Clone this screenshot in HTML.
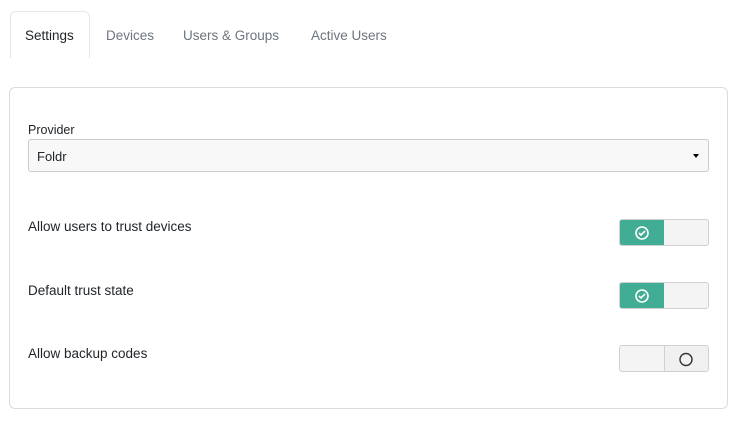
<!DOCTYPE html>
<html><head><meta charset="utf-8"><style>
body{margin:0;width:729px;height:422px;background:#fff;font-family:"Liberation Sans",sans-serif;color:#212529;position:relative;overflow:hidden;font-size:13.5px}
.abs{position:absolute}
.tab{position:absolute;top:28px;font-size:13.5px;color:#6c757d}
.active{left:10px;top:11px;width:78px;height:46px;border:1px solid #e6e6e6;border-bottom:none;border-radius:6px 6px 0 0;background:#fff}
.card{left:9px;top:87px;width:717px;height:320px;border:1px solid #dcdcdc;border-radius:6px}
.sel{left:28px;top:139px;width:679px;height:31px;border:1px solid #ccc;border-radius:3px;background:#f8f8f8}
.tg{position:absolute;left:619px;width:88px;height:25px;border:1px solid #d0d0d0;border-radius:3px;background:#f4f4f4;overflow:hidden}
.on{position:absolute;left:0;top:0;width:44px;height:100%;background:#41ad94}
.off{position:absolute;left:44px;top:0;width:44px;height:100%;border-left:1px solid #d0d0d0;background:#f0f0f0}
.lbl{position:absolute;left:28px}
</style></head><body>
<div class="abs active"></div>
<div class="tab" style="left:25px;color:#212529">Settings</div>
<div class="tab" style="left:106px">Devices</div>
<div class="tab" style="left:183px">Users &amp; Groups</div>
<div class="tab" style="left:311px">Active Users</div>
<div class="abs card"></div>
<div class="lbl" style="top:123px;font-size:12.5px">Provider</div>
<div class="abs sel"><span style="position:absolute;left:8px;top:9px;font-size:13px">Foldr</span>
<span style="position:absolute;right:9px;top:14px;width:0;height:0;border-left:3px solid transparent;border-right:3px solid transparent;border-top:4px solid #000"></span></div>
<div class="lbl" style="top:219px">Allow users to trust devices</div>
<div class="lbl" style="top:283px">Default trust state</div>
<div class="lbl" style="top:346px">Allow backup codes</div>
<div class="tg" style="top:219px"><div class="on"><svg width="44" height="25"><circle cx="22" cy="13" r="6" fill="none" stroke="#fff" stroke-width="1.6"/><path d="M19 13l2 2 4-4" fill="none" stroke="#fff" stroke-width="1.6"/></svg></div></div>
<div class="tg" style="top:282px"><div class="on"><svg width="44" height="25"><circle cx="22" cy="13" r="6" fill="none" stroke="#fff" stroke-width="1.6"/><path d="M19 13l2 2 4-4" fill="none" stroke="#fff" stroke-width="1.6"/></svg></div></div>
<div class="tg" style="top:345px"><div class="off"><svg width="44" height="26"><circle cx="21" cy="13.5" r="6" fill="none" stroke="#333" stroke-width="1.4"/></svg></div></div>
</body></html>
